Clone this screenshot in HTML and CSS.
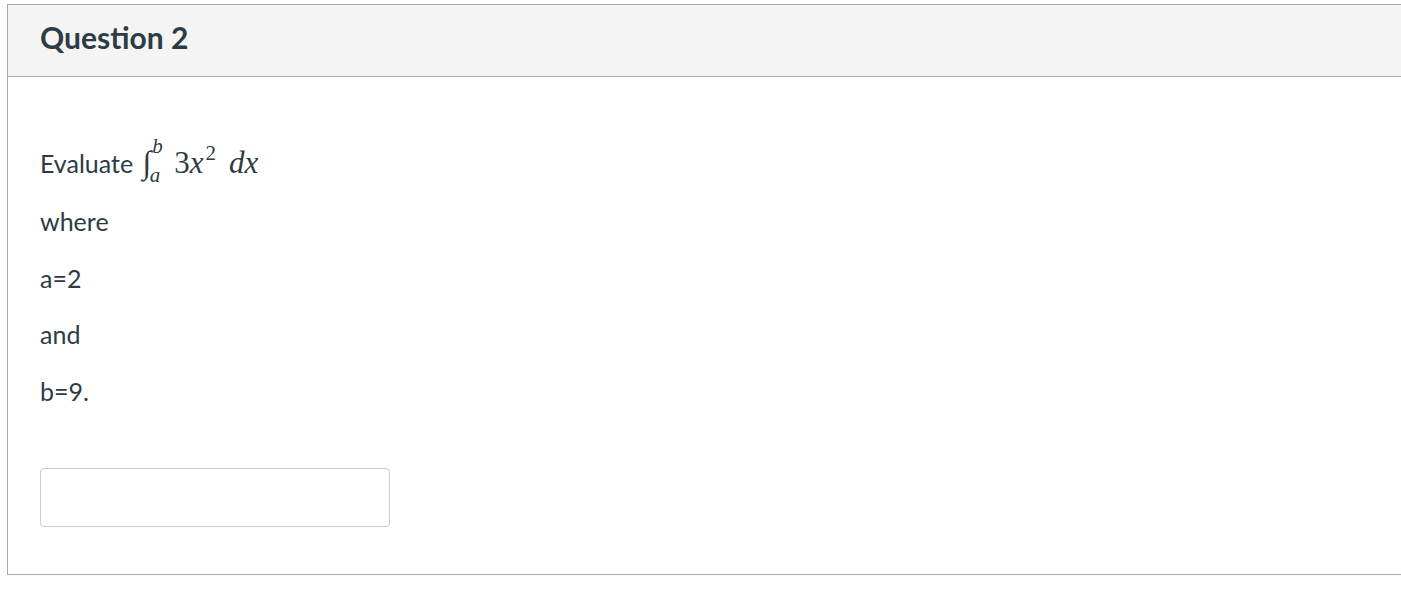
FILE: index.html
```html
<!DOCTYPE html>
<html>
<head>
<meta charset="utf-8">
<link rel="stylesheet" href="styles.css">
</head>
<body>
<div class="question">
  <div class="header">
    <h2 class="title">Question 2</h2>
  </div>
  <div class="content">
    <p class="line first">Evaluate <span class="math"><span class="int">∫</span><span class="sup">b</span><span class="sub">a</span><span class="num">3</span><span class="var">x</span><span class="pow">2</span><span class="var dvar">d</span><span class="var">x</span></span></p>
    <p class="line">where</p>
    <p class="line">a=2</p>
    <p class="line">and</p>
    <p class="line">b=9.</p>
    <div class="answer"><input class="field" type="text"></div>
  </div>
</div>
</body>
</html>
```

FILE: styles.css
```css
html, body { margin: 0; padding: 0; background: #fff; }
body { padding: 4px 0 0 7px; }
.question {
  width: 1420px;
  border: 1px solid #aaaaaa;
  box-sizing: border-box;
  font-family: Lato, "Liberation Sans", sans-serif;
  color: #2d3b45;
}
.header {
  background: #f4f4f4;
  border-bottom: 1px solid #aaaaaa;
  box-sizing: border-box;
  height: 72px;
  padding: 17px 0 0 32px;
}
.title {
  margin: 0;
  font-size: 30px;
  font-weight: 700;
  line-height: 30px;
  color: #2d3b45;
}
.content {
  padding: 68px 32px 47px;
}
.line {
  margin: 0 0 20.5px;
  font-size: 25px;
  line-height: 36px;
}
.line.first { margin-bottom: 22px; }
.math {
  font-family: "Liberation Serif", "DejaVu Serif", serif;
  font-size: 31px;
  line-height: 0;
  margin-left: 3px;
  color: #2d3b45;
}
.int { font-style: italic; font-size: 32px; }
.sup { font-style: italic; font-size: 21px; vertical-align: 20px; margin-left: 1px; }
.sub { font-style: italic; font-size: 21px; vertical-align: -9px; margin-left: -13px; }
.num { margin-left: 14px; }
.var { font-style: italic; }
.pow { font-size: 21px; vertical-align: 13px; margin-left: 2px; }
.dvar { margin-left: 13px; }
.answer { margin-top: 59px; }
.field {
  display: block;
  width: 350px;
  height: 59px;
  box-sizing: border-box;
  border: 1px solid #c7cdd1;
  border-radius: 4px;
  background: #fff;
  margin: 0;
}
```
